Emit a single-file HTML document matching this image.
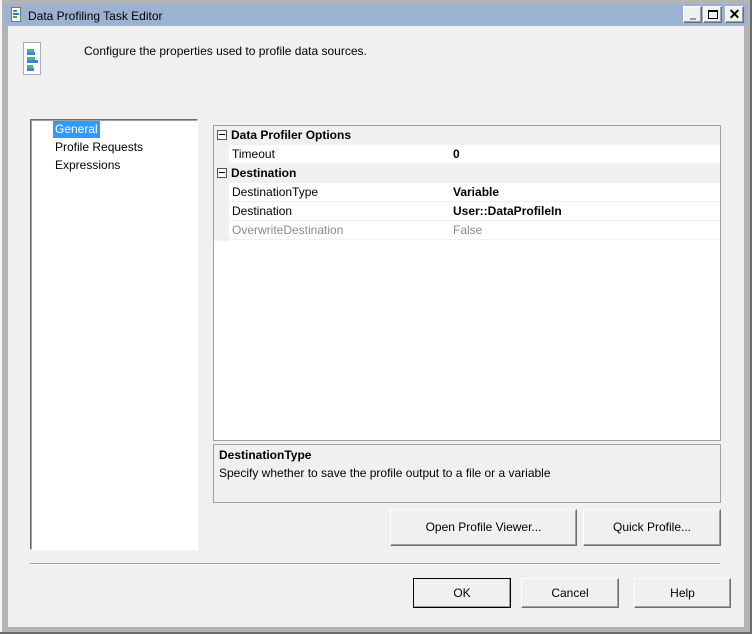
<!DOCTYPE html>
<html><head><style>
*{margin:0;padding:0;box-sizing:border-box}
body{width:752px;height:634px;background:#fff;position:relative;overflow:hidden;font-family:"Liberation Sans",sans-serif;font-size:12px;color:#000}
.a{position:absolute}
.btn{position:absolute;background:#f0f0f0;border:1px solid;border-color:#fff #6f6f6f #6f6f6f #fff;box-shadow:inset -1px -1px 0 #a0a0a0;text-align:center;font-size:12px}
.row{position:absolute;left:0;right:0;height:19px;line-height:18px;border-bottom:1px solid #f0f0f0}
.cat{background:#f0f0f0;font-weight:bold}
.box{position:absolute;left:3px;top:4px;width:10px;height:10px;border:1px solid #555;background:#fff}
.box:after{content:"";position:absolute;left:1px;top:3px;width:6px;height:1px;background:#000}
</style></head><body>
<div class="a" style="left:0;top:0;width:752px;height:634px;background:#b4b4b4"></div>
<div class="a" style="left:0;top:0;width:2px;height:634px;background:#f4f4f4"></div>
<div class="a" style="left:0;top:632px;width:752px;height:2px;background:#6a6a6a"></div>
<div class="a" style="left:750px;top:0;width:2px;height:634px;background:#6a6a6a"></div>
<div class="a" style="left:4px;top:4px;width:744px;height:22px;background:#9bb3d1"></div>
<div class="a" style="left:11px;top:7px;width:10px;height:15px;background:#fff;border:1px solid #777"></div>
<div class="a" style="left:13px;top:10px;width:4px;height:2px;background:#4a4"></div>
<div class="a" style="left:13px;top:13px;width:6px;height:2px;background:#37c"></div>
<div class="a" style="left:13px;top:16px;width:4px;height:2px;background:#4a4"></div>
<div class="a" style="left:28px;top:8px;line-height:16px">Data Profiling Task Editor</div>
<div class="btn" style="left:683px;top:6px;width:19px;height:17px"><div class="a" style="left:6px;top:11px;width:6px;height:2px;background:#999"></div></div>
<div class="btn" style="left:703px;top:6px;width:19px;height:17px"><div class="a" style="left:4px;top:3px;width:10px;height:9px;border:1px solid #000;border-top-width:2px"></div></div>
<div class="btn" style="left:725px;top:6px;width:19px;height:17px;font-weight:bold;font-size:14px;line-height:14px">✕</div>
<div class="a" style="left:8px;top:26px;width:736px;height:601px;background:#f0f0f0"></div>
<div class="a" style="left:23px;top:42px;width:18px;height:33px;background:#fff;border:1px solid #aab"></div>
<div class="a" style="left:27px;top:49px;width:7px;height:3px;background:#5b5"></div>
<div class="a" style="left:27px;top:52px;width:8px;height:3px;background:#38d"></div>
<div class="a" style="left:27px;top:57px;width:8px;height:3px;background:#5b5"></div>
<div class="a" style="left:27px;top:60px;width:11px;height:3px;background:#38d"></div>
<div class="a" style="left:27px;top:65px;width:6px;height:3px;background:#5b5"></div>
<div class="a" style="left:27px;top:68px;width:7px;height:3px;background:#38d"></div>
<div class="a" style="left:84px;top:44px">Configure the properties used to profile data sources.</div>
<div class="a" style="left:30px;top:119px;width:168px;height:431px;background:#fff;border:1px solid;border-color:#6a6a6a #fff #fff #6a6a6a;box-shadow:inset 1px 1px 0 #a0a0a0"></div>
<div class="a" style="left:53px;top:121px;height:17px;line-height:17px;padding:0 2px;background:#3399ff;color:#fff">General</div>
<div class="a" style="left:55px;top:140px">Profile Requests</div>
<div class="a" style="left:55px;top:158px">Expressions</div>
<div class="a" style="left:213px;top:125px;width:508px;height:316px;background:#fff;border:1px solid #a0a0a0">
<div class="a" style="left:0;top:0;width:15px;height:115px;background:#f0f0f0"></div>
<div class="row cat" style="top:0"><div class="box"></div><span style="padding-left:17px">Data Profiler Options</span></div>
<div class="row" style="top:19px;left:15px"><span style="padding-left:3px">Timeout</span><b class="a" style="left:224px">0</b></div>
<div class="row cat" style="top:38px"><div class="box"></div><span style="padding-left:17px">Destination</span></div>
<div class="row" style="top:57px;left:15px"><span style="padding-left:3px">DestinationType</span><b class="a" style="left:224px">Variable</b></div>
<div class="row" style="top:76px;left:15px"><span style="padding-left:3px">Destination</span><b class="a" style="left:224px">User::DataProfileIn</b></div>
<div class="row" style="top:95px;left:15px;color:#8a8a8a"><span style="padding-left:3px">OverwriteDestination</span><span class="a" style="left:224px">False</span></div>
</div>
<div class="a" style="left:213px;top:444px;width:508px;height:59px;border:1px solid #a0a0a0">
<div class="a" style="left:5px;top:3px;font-weight:bold">DestinationType</div>
<div class="a" style="left:5px;top:21px">Specify whether to save the profile output to a file or a variable</div>
</div>
<div class="btn" style="left:390px;top:509px;width:187px;height:37px;line-height:35px">Open Profile Viewer...</div>
<div class="btn" style="left:583px;top:509px;width:138px;height:37px;line-height:35px">Quick Profile...</div>
<div class="a" style="left:30px;top:563px;width:690px;height:2px;border-top:1px solid #a0a0a0;border-bottom:1px solid #fff"></div>
<div class="btn" style="left:413px;top:578px;width:98px;height:30px;line-height:28px;border:1px solid #000">OK</div>
<div class="btn" style="left:521px;top:578px;width:98px;height:30px;line-height:28px">Cancel</div>
<div class="btn" style="left:634px;top:578px;width:97px;height:30px;line-height:28px">Help</div>
</body></html>
